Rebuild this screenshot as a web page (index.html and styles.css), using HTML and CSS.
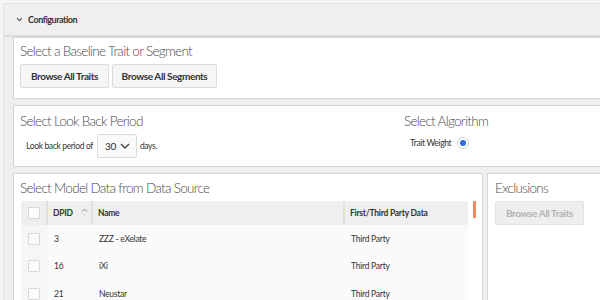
FILE: index.html
```html
<!DOCTYPE html>
<html>
<head>
<meta charset="utf-8">
<link rel="stylesheet" href="styles.css">
</head>
<body>
<div class="panel">
  <div class="panel-header">
    <svg class="chev" width="7" height="5" viewBox="0 0 7 5"><path d="M1 1.2 L3.5 3.7 L6 1.2" fill="none" stroke="#555" stroke-width="1.1"/></svg>
    <span>Configuration</span>
  </div>
  <div class="panel-body">
    <section class="card card-baseline">
      <h2 class="title">Select a Baseline Trait or Segment</h2>
      <div class="btn-row">
        <button class="btn btn-traits">Browse All Traits</button>
        <button class="btn btn-segments">Browse All Segments</button>
      </div>
    </section>
    <section class="card card-period">
      <div class="period">
        <h2 class="title">Select Look Back Period</h2>
        <div class="period-row">
          <span class="small">Look back period of</span>
          <div class="select"><span>30</span>
            <svg width="10" height="6" viewBox="0 0 10 6"><path d="M1 1 L5 5 L9 1" fill="none" stroke="#444" stroke-width="1.4"/></svg>
          </div>
          <span class="small">days.</span>
        </div>
      </div>
      <div class="algo">
        <h2 class="title">Select Algorithm</h2>
        <div class="algo-row">
          <span class="small">Trait Weight</span>
          <span class="radio"><span class="dot"></span></span>
        </div>
      </div>
    </section>
    <div class="split">
      <section class="card card-model">
        <h2 class="title">Select Model Data from Data Source</h2>
        <div class="table-wrap">
          <table class="table">
            <thead>
              <tr>
                <th class="c-check"><span class="cb"></span></th>
                <th class="c-dpid"><span class="th-in">DPID<svg class="sort" width="7" height="8" viewBox="0 0 7 8"><path d="M1 3.5 L3.5 1 L6 3.5" fill="none" stroke="#8a8a8a" stroke-width="1"/><path d="M1.5 5.8 L3.5 7.3 L5.5 5.8" fill="none" stroke="#d2d2d2" stroke-width="0.9"/></svg></span></th>
                <th class="c-name">Name</th>
                <th class="c-party">First/Third Party Data</th>
              </tr>
            </thead>
            <tbody>
              <tr><td class="c-check"><span class="cb"></span></td><td>3</td><td>ZZZ - eXelate</td><td>Third Party</td></tr>
              <tr><td class="c-check"><span class="cb"></span></td><td>16</td><td>iXi</td><td>Third Party</td></tr>
              <tr><td class="c-check"><span class="cb"></span></td><td>21</td><td>Neustar</td><td>Third Party</td></tr>
            </tbody>
          </table>
          <div class="scroll-thumb"></div>
        </div>
      </section>
      <section class="card card-excl">
        <h2 class="title">Exclusions</h2>
        <button class="btn btn-disabled">Browse All Traits</button>
      </section>
    </div>
  </div>
</div>
</body>
</html>
```

FILE: styles.css
```css
* { box-sizing: border-box; }
html, body { margin: 0; padding: 0; }
body {
  background: #f5f5f5;
  font-family: Lato, "Open Sans", sans-serif;
  color: #2c2c2c;
  width: 600px;
  height: 300px;
  overflow: hidden;
}
.panel {
  margin: 3px 0 0 3px;
  background: #efefef;
  border: 1px solid #e4e4e4;
  border-right: none;
  border-bottom: none;
  height: 297px;
  overflow: hidden;
}
.panel-header {
  height: 31px;
  display: flex;
  align-items: center;
  padding-left: 12px;
  font-size: 9px;
  letter-spacing: -0.45px;
  font-weight: 700;
  color: #333;
}
.chev { margin-right: 5px; }
.panel-body {
  border-top: 2px solid #dcdcdc;
  padding: 0 0 0 9px;
  display: flex;
  flex-direction: column;
  gap: 6px;
}
.card {
  background: #fff;
  border: 1px solid #d4d4d4;
  border-right: none;
  padding: 5px 6px 0 6px;
}
.title {
  margin: 0;
  font-size: 13.5px;
  letter-spacing: -0.7px;
  font-weight: 300;
  color: #4b4b4b;
  line-height: 16px;
  white-space: nowrap;
}
.card-baseline { height: 62px; }
.btn-row { display: flex; gap: 3px; margin-top: 5px; }
.btn {
  font-family: inherit;
  height: 24px;
  padding: 0;
  background: #f6f6f6;
  border: 1px solid #dcdcdc;
  border-radius: 2px;
  font-size: 10px;
  letter-spacing: -0.4px;
  font-weight: 700;
  color: #333;
  white-space: nowrap;
}
.btn-traits { width: 89px; }
.btn-segments { width: 105px; }
.card-period { height: 62px; display: flex; padding-top: 7px; }
.period { width: 384px; }
.period-row { display: flex; align-items: center; margin-top: 5px; padding-left: 6px; }
.small { font-size: 8.5px; letter-spacing: -0.35px; color: #333; }
.select {
  margin: 0 3px 0 4px;
  width: 40px;
  height: 24px;
  border: 1px solid #dcdcdc;
  border-radius: 2px;
  background: #fafafa;
  display: flex;
  align-items: center;
  justify-content: space-between;
  padding: 0 6px 0 7px;
  font-size: 10px;
  letter-spacing: -0.2px;
}
.algo-row { display: flex; align-items: center; padding-left: 6px; margin-top: 8px; height: 12px; }
.radio {
  margin-left: 6px;
  width: 12px; height: 12px;
  border: 1px solid #cfcfcf;
  border-radius: 50%;
  background: #fff;
  display: flex; align-items: center; justify-content: center;
}
.dot { width: 6px; height: 6px; border-radius: 50%; background: #2a6fd6; }
.split { display: flex; gap: 4px; }
.card-model { width: 470px; height: 140px; border-right: 1px solid #d4d4d4; padding-top: 6px; }
.card-excl { flex: 1; height: 140px; padding-top: 6px; padding-left: 7px; }
.table-wrap { position: relative; margin: 5px 0 0 1px; width: 447px; }
.table {
  width: 447px;
  border-collapse: collapse;
  table-layout: fixed;
  font-size: 8.5px;
  letter-spacing: -0.25px;
  color: #333;
}
.table th {
  background: #efefef;
  height: 24px;
  text-align: left;
  font-weight: 700;
  padding: 0 5px;
  border-left: 2px solid #e0e0e0;
  white-space: nowrap;
}
.table th:first-child { border-left: none; }
.table td { height: 27.5px; padding: 0 5px 0 7px; background: #fafafa; }
.table td:first-child { background: #f6f6f6; }
.c-check { width: 26px; }
.c-dpid { width: 45px; }
.c-name { width: 252px; }
.table .c-check { padding: 0 0 0 7px; }
.th-in { display: inline-flex; align-items: center; }
.cb {
  display: block;
  width: 12px; height: 12px;
  border: 1px solid #d8d8d8;
  background: #fbfbfb;
  border-radius: 1px;
}
.sort { margin-left: 8px; margin-top: -3px; }
.scroll-thumb {
  position: absolute;
  right: -8px; top: 0;
  width: 3px; height: 17px;
  background: #f08a62;
}
.btn-disabled { width: 89px; margin-top: 5px; color: #b3b3b3; background: #eeeeee; border-color: #e2e2e2; }
```
